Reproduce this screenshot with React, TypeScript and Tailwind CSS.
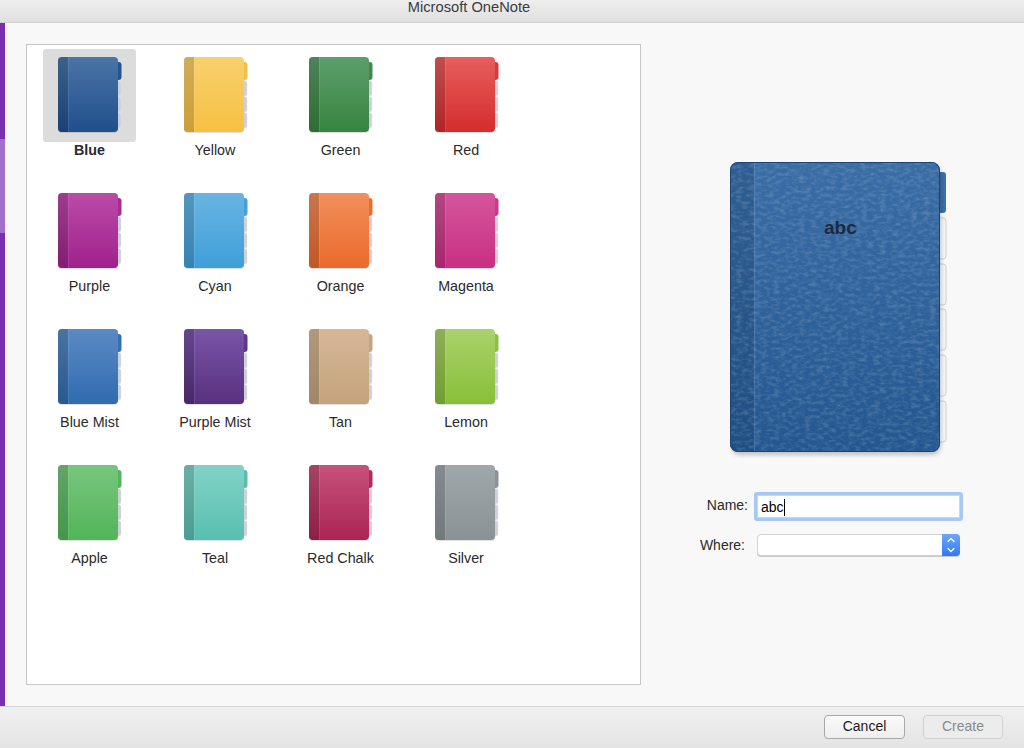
import { ChevronDown, ChevronUp } from "lucide-react";

const books = [
  { name: "Blue", top: "#4a74a6", bottom: "#1f4f8c", tab: "#24548e" },
  { name: "Yellow", top: "#f8d06e", bottom: "#f6c042", tab: "#f2bf4e" },
  { name: "Green", top: "#5c9e6c", bottom: "#37843f", tab: "#3f8a4c" },
  { name: "Red", top: "#e85e5e", bottom: "#d42c2c", tab: "#d63a3a" },
  { name: "Purple", top: "#bb4ba8", bottom: "#a0218c", tab: "#a52c93" },
  { name: "Cyan", top: "#68b4e2", bottom: "#3f9fd8", tab: "#469fd6" },
  { name: "Orange", top: "#f28f5c", bottom: "#ea6a2a", tab: "#e8702f" },
  { name: "Magenta", top: "#d5559c", bottom: "#c92f82", tab: "#c93a88" },
  { name: "Blue Mist", top: "#5b8ac4", bottom: "#2f6cae", tab: "#3570b0" },
  { name: "Purple Mist", top: "#7a55a8", bottom: "#57307f", tab: "#5c3888" },
  { name: "Tan", top: "#d6b796", bottom: "#c4a27c", tab: "#c4a480" },
  { name: "Lemon", top: "#a9d26c", bottom: "#88bf38", tab: "#8cc044" },
  { name: "Apple", top: "#78c67e", bottom: "#52b558", tab: "#56b45e" },
  { name: "Teal", top: "#82d2c6", bottom: "#58bfb0", tab: "#5cbcae" },
  { name: "Red Chalk", top: "#c6527a", bottom: "#ac2454", tab: "#b02c5c" },
  { name: "Silver", top: "#a0a7ab", bottom: "#8a9295", tab: "#8c9397" },
];

type BookColors = (typeof books)[number];

function SmallBook({ b }: { b: BookColors }) {
  const id = "g" + b.name.replace(" ", "");
  return (
    <svg width="66" height="78" viewBox="0 0 66 78">
      <defs>
        <linearGradient id={id} x1="0" y1="0" x2="0" y2="1">
          <stop offset="0" stopColor={b.top} />
          <stop offset="1" stopColor={b.bottom} />
        </linearGradient>
      </defs>
      {[24.5, 40.5, 56.5].map((y) => (
        <rect key={y} x="56" y={y} width="8" height="15.5" rx="2.5" fill="#cdd0d6" stroke="#e2e2e6" strokeWidth="0.5" />
      ))}
      <rect x="56" y="6" width="8.5" height="18" rx="3" fill={b.tab} />
      <rect x="1" y="2" width="60" height="75" rx="4" fill="#000000" opacity="0.12" />
      <rect x="1" y="1" width="60" height="75" rx="4" fill={`url(#${id})`} />
      <path d="M4 1h7v75H4a3 3 0 0 1-3-3V4a3 3 0 0 1 3-3z" fill="#000000" opacity="0.17" />
      <rect x="11" y="1" width="0.8" height="75" fill="#ffffff" opacity="0.14" />
    </svg>
  );
}

function LargeBook() {
  return (
    <svg width="222" height="296" viewBox="0 0 222 296">
      <defs>
        <linearGradient id="bigCover" x1="0" y1="0" x2="0" y2="1">
          <stop offset="0" stopColor="#3a6da6" />
          <stop offset="1" stopColor="#24578f" />
        </linearGradient>
        <filter id="leather" x="0" y="0" width="100%" height="100%">
          <feTurbulence type="fractalNoise" baseFrequency="0.16 0.28" numOctaves="3" seed="11" />
          <feColorMatrix values="0 0 0 0 1  0 0 0 0 1  0 0 0 0 1  1.5 0 0 0 -0.62" />
        </filter>
        <filter id="soft" x="-5%" y="-5%" width="110%" height="110%">
          <feGaussianBlur stdDeviation="2" />
        </filter>
      </defs>
      {[56, 102, 147, 193, 239].map((y) => (
        <rect key={y} x="205" y={y} width="11" height="41" rx="3" fill="#f5f5f5" stroke="#cecece" />
      ))}
      <rect x="205" y="10" width="11" height="41" rx="3" fill="#3f6fa6" />
      <rect x="1" y="3" width="210" height="290" rx="9" fill="#000000" opacity="0.22" filter="url(#soft)" />
      <rect x="0" y="0" width="210" height="290" rx="8" fill="url(#bigCover)" />
      <path d="M8 0h16v290H8a8 8 0 0 1-8-8V8a8 8 0 0 1 8-8z" fill="#163a68" opacity="0.3" />
      <rect x="0" y="0" width="210" height="290" rx="8" filter="url(#leather)" opacity="0.24" />
      <rect x="24" y="0" width="1" height="290" fill="#ffffff" opacity="0.14" />
      <rect x="0.5" y="0.5" width="209" height="289" rx="8" fill="none" stroke="#1c4472" />
    </svg>
  );
}

export default function App() {
  return (
    <div className="flex h-[748px] w-[1024px] flex-col overflow-hidden bg-[#f8f8f8] font-['Liberation_Sans',sans-serif] text-[14px] text-[#2a2a2a]">
      <div className="flex h-[23px] shrink-0 items-center justify-center border-b border-[#cfcfcf] bg-gradient-to-b from-[#eeeeee] to-[#e0e0e0] pr-[86px] pb-[8px] text-[14.7px] text-[#3c3c3c]">
        Microsoft OneNote
      </div>

      <div className="flex min-h-0 flex-1">
        <div className="flex w-[5px] shrink-0 flex-col bg-[#7a2fb0]">
          <div className="mt-[116px] h-[94px] bg-[#a26fcb]" />
        </div>

        <div className="mt-[21px] ml-[21px] h-[641px] w-[615px] shrink-0 border border-[#c6c6c6] bg-white pt-[4px] pl-[16px]">
          <div className="grid grid-cols-[repeat(4,93px)] gap-x-[32.5px] gap-y-[25px]">
            {books.map((b) => (
              <div key={b.name} className="flex flex-col items-center">
                <div className={`flex h-[93px] w-[93px] justify-center rounded-[3px] pt-[7px] pl-[1px] ${b.name === "Blue" ? "bg-[#dcdcdc]" : ""}`}>
                  <SmallBook b={b} />
                </div>
                <div className={`h-[18px] whitespace-nowrap text-[14.3px] leading-[16px] ${b.name === "Blue" ? "font-bold" : ""}`}>{b.name}</div>
              </div>
            ))}
          </div>
        </div>

        <div className="flex min-w-0 flex-1 flex-col pt-[139px] pl-[89px]">
          <div className="relative">
            <LargeBook />
            <span className="absolute top-[55px] left-[94px] text-[19px] leading-[22px] font-bold text-[#1e2a3c]">abc</span>
          </div>
          <div className="mt-[34px] -ml-[30px] flex items-center">
            <span className="w-[48px] pb-[3px] text-right">Name:</span>
            <div className="ml-[6px] flex h-[29px] w-[209px] items-center rounded-[3px] bg-[#a6c8f5] p-[3px]">
              <div className="flex h-full w-full items-center border border-[#d4d4d4] bg-white pt-[1px] pl-[3px] text-[14px] text-black">
                abc<span className="h-[17px] w-px bg-black" />
              </div>
            </div>
          </div>
          <div className="mt-[13px] -ml-[30px] flex items-center">
            <span className="-ml-[3px] w-[48px] text-right">Where:</span>
            <div className="ml-[12px] flex h-[22px] w-[203px] rounded-[4px] border border-[#d2d2d2] bg-white shadow-[0_1px_0_#c8c8c8]">
              <div className="flex-1" />
              <div className="-my-px -mr-px flex w-[18px] flex-col items-center justify-center rounded-r-[4px] bg-gradient-to-b from-[#6ea6f8] to-[#2f7bf0] text-white">
                <ChevronUp size={12} strokeWidth={2.5} className="-mb-[1px]" />
                <ChevronDown size={12} strokeWidth={2.5} className="-mt-[1px]" />
              </div>
            </div>
          </div>
        </div>
      </div>

      <div className="flex h-[42px] shrink-0 items-center justify-end gap-[18px] border-t border-[#d4d4d4] bg-gradient-to-b from-[#f0f0f0] to-[#e4e4e4] pr-[21px] pb-[2px]">
        <button className="h-[24px] w-[81px] rounded-[4px] border border-[#a8a8a8] bg-gradient-to-b from-[#fbfbfb] to-[#eeeeee] text-[14px] text-[#1c1c1c]">Cancel</button>
        <button className="h-[24px] w-[80px] rounded-[4px] border border-[#d0d0d0] bg-[#ececec] text-[14px] text-[#8a8a8a]">Create</button>
      </div>
    </div>
  );
}
